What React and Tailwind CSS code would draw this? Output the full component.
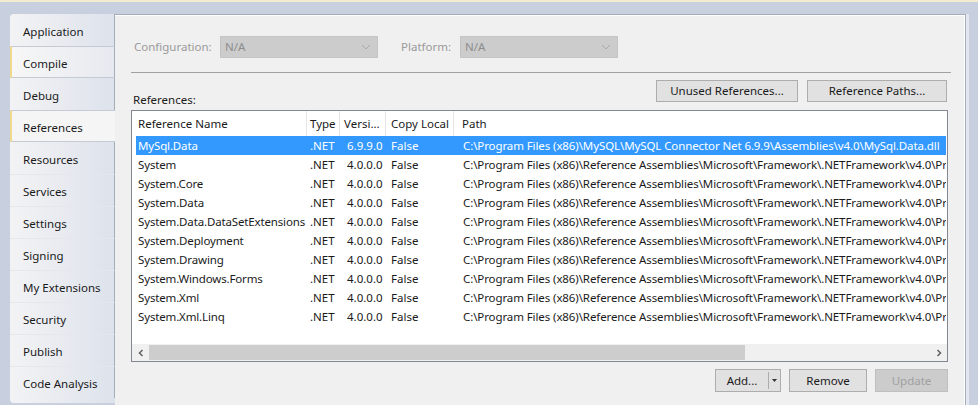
import React from "react";

const tabs = [
  "Application",
  "Compile",
  "Debug",
  "References",
  "Resources",
  "Services",
  "Settings",
  "Signing",
  "My Extensions",
  "Security",
  "Publish",
  "Code Analysis",
];

const fw = "C:\\Program Files (x86)\\Reference Assemblies\\Microsoft\\Framework\\.NETFramework\\v4.0\\Profile\\Client\\";

const refs = [
  ["MySql.Data", ".NET", "6.9.9.0", "False", "C:\\Program Files (x86)\\MySQL\\MySQL Connector Net 6.9.9\\Assemblies\\v4.0\\MySql.Data.dll"],
  ["System", ".NET", "4.0.0.0", "False", fw + "System.dll"],
  ["System.Core", ".NET", "4.0.0.0", "False", fw + "System.Core.dll"],
  ["System.Data", ".NET", "4.0.0.0", "False", fw + "System.Data.dll"],
  ["System.Data.DataSetExtensions", ".NET", "4.0.0.0", "False", fw + "System.Data.DataSetExtensions.dll"],
  ["System.Deployment", ".NET", "4.0.0.0", "False", fw + "System.Deployment.dll"],
  ["System.Drawing", ".NET", "4.0.0.0", "False", fw + "System.Drawing.dll"],
  ["System.Windows.Forms", ".NET", "4.0.0.0", "False", fw + "System.Windows.Forms.dll"],
  ["System.Xml", ".NET", "4.0.0.0", "False", fw + "System.Xml.dll"],
  ["System.Xml.Linq", ".NET", "4.0.0.0", "False", fw + "System.Xml.Linq.dll"],
];

const Chevron = ({ dir }) => (
  <svg width="8" height="8" viewBox="0 0 8 8" fill="none" stroke="#606060" strokeWidth="1.5">
    {dir === "left" ? <path d="M5.5 1 L2.5 4 L5.5 7" /> : <path d="M2.5 1 L5.5 4 L2.5 7" />}
  </svg>
);

const Dropdown = () => (
  <div className="w-[158px] h-[22px] bg-[#cccccc] border border-[#c4c4c4] flex items-center justify-between pl-[4px] pr-[6px] text-[#8c8c8c]">
    <span>N/A</span>
    <svg width="10" height="6" viewBox="0 0 10 6" fill="none" stroke="#a8a8a8" strokeWidth="1">
      <path d="M1 1 L5 5 L9 1" />
    </svg>
  </div>
);

export default function App() {
  return (
    <div className="w-[978px] h-[405px] overflow-hidden bg-[#c8d0e0] font-['Noto_Sans',sans-serif] text-[11.5px] leading-none text-[#1a1a1a] flex flex-col">
      {/* top strip */}
      <div className="h-[2px] bg-[#f2edcf] shrink-0" />

      <div className="flex flex-1 pt-[12px] pl-[10px] pr-[9px] min-h-0">
        {/* TABS */}
        <div className="w-[105px] shrink-0 flex flex-col rounded-tl-[4px] rounded-bl-[4px] overflow-hidden bg-gradient-to-r from-[#f3f3f5] to-[#dde2eb] h-[389px]">
          {tabs.map((t, i) => {
            const sel = t === "References";
            const hl = t === "Compile";
            const prevSpecial = i > 0 && (tabs[i - 1] === "Compile" || tabs[i - 1] === "References");
            return (
              <div
                key={t}
                className={`h-[32px] shrink-0 flex items-center pt-[3px] ${
                  sel
                    ? "bg-[#f5f5f6] border-l-[2px] border-l-[#f0d98c] border-y border-y-[#c5cad4] pl-[11px] mr-[-1px] relative z-10"
                    : hl
                    ? "bg-gradient-to-r from-[#f7f7f7] to-[#e6e9ef] border-l-[2px] border-l-[#f0d98c] border-y border-y-[#c5cad4] pl-[11px] border-r border-r-[#a5acba]"
                    : `pl-[13px] border-r border-r-[#a5acba] ${i > 0 && !prevSpecial ? "border-t border-t-[#e4e7ed]" : ""}`
                }`}
              >
                {t}
              </div>
            );
          })}
        </div>

        {/* PANEL FRAME */}
        <div className="flex-1 min-w-0 bg-[#e3e6ee] pr-[3px]">
          <div className="h-full bg-[#f0f0f0] border-t border-r border-[#a5acba] shadow-[inset_0_1px_0_#ffffff,inset_-1px_0_0_#ffffff] pl-[16px] pr-[17px] pt-[21px] overflow-hidden">
            <div className="flex items-center h-[22px]">
              <span className="w-[89px] pl-[3px] text-[#9a9a9a]">Configuration:</span>
              <Dropdown />
              <span className="ml-[23px] w-[59px] text-[#9a9a9a]">Platform:</span>
              <Dropdown />
            </div>

            <div className="mt-[14px] h-px bg-[#a0a0a0] mr-[-3px]" />

            <div className="mt-[7px] flex items-end justify-between">
              <span className="pl-[2px] mb-[-3px]">References:</span>
              <div className="flex gap-[9px] mr-[1px]">
                <div className="w-[142px] h-[22px] bg-[#e1e1e1] border border-[#adadad] flex items-center justify-center">
                  Unused References...
                </div>
                <div className="w-[140px] h-[22px] bg-[#e1e1e1] border border-[#adadad] flex items-center justify-center">
                  Reference Paths...
                </div>
              </div>
            </div>

            {/* LIST VIEW */}
            <div className="mt-[8px] h-[252px] bg-white border border-[#828790] flex flex-col overflow-hidden">
              <div className="h-[25px] flex shrink-0">
                <div className="w-[175px] shrink-0 pl-[6px] flex items-center border-r border-[#e5e5e5]">Reference Name</div>
                <div className="w-[33px] shrink-0 pl-[3px] flex items-center border-r border-[#e5e5e5]">Type</div>
                <div className="w-[46px] shrink-0 pl-[4px] flex items-center border-r border-[#e5e5e5]">Versi...</div>
                <div className="w-[68px] shrink-0 pl-[5px] flex items-center border-r border-[#e5e5e5]">Copy Local</div>
                <div className="flex-1 pl-[8px] flex items-center">Path</div>
              </div>

              <div className="flex-1 ml-[4px] mr-[1px] flex flex-col min-w-0">
                {refs.map((r, i) => (
                  <div
                    key={r[0]}
                    className={`h-[19px] shrink-0 flex items-center whitespace-nowrap overflow-hidden ${
                      i === 0 ? "bg-[#3399ff] text-white" : ""
                    }`}
                  >
                    <div className="w-[171px] shrink-0 pl-[2px] tracking-[-0.15px]">{r[0]}</div>
                    <div className="w-[33px] shrink-0 pl-[3px]">{r[1]}</div>
                    <div className="w-[46px] shrink-0 pl-[7px]">{r[2]}</div>
                    <div className="w-[68px] shrink-0 pl-[5px]">{r[3]}</div>
                    <div className="shrink-0 pl-[9px] tracking-[-0.1px]">{r[4]}</div>
                  </div>
                ))}
              </div>

              {/* H SCROLLBAR */}
              <div className="h-[17px] shrink-0 flex bg-[#f0f0f0]">
                <div className="w-[17px] flex items-center justify-center">
                  <Chevron dir="left" />
                </div>
                <div className="w-[596px] bg-[#cdcdcd] my-[1px]" />
                <div className="flex-1" />
                <div className="w-[17px] flex items-center justify-center">
                  <Chevron dir="right" />
                </div>
              </div>
            </div>

            {/* BOTTOM BUTTONS */}
            <div className="mt-[7px] flex justify-end gap-[8px]">
              <div className="h-[23px] w-[66px] bg-[#e1e1e1] border border-[#adadad] flex items-center">
                <span className="w-[52px] text-center">Add...</span>
                <div className="h-[17px] w-px bg-[#adadad]" />
                <div className="flex-1 flex items-center justify-center">
                  <svg width="5" height="3" viewBox="0 0 5 3">
                    <path d="M0 0 H5 L2.5 3 Z" fill="#333" />
                  </svg>
                </div>
              </div>
              <div className="h-[23px] w-[78px] bg-[#e1e1e1] border border-[#adadad] flex items-center justify-center">Remove</div>
              <div className="h-[23px] w-[73px] bg-[#cccccc] border border-[#bfbfbf] text-[#a0a0a0] flex items-center justify-center">Update</div>
            </div>
          </div>
        </div>
      </div>
    </div>
  );
}
